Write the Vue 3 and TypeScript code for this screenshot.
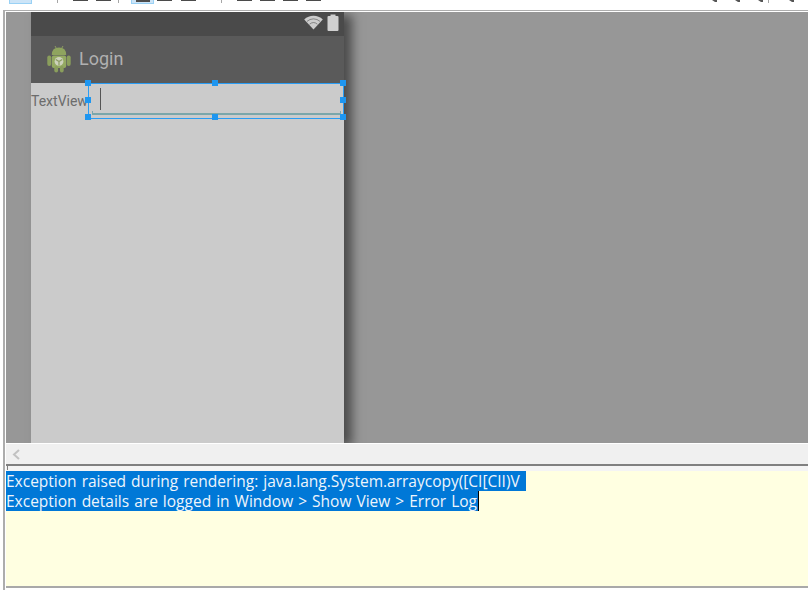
<script setup lang="ts">
const groups: { left: number; width: number; kind: string }[] = [
  { left: 9, width: 23, kind: 'on' },
  { left: 57, width: 1, kind: 'sep' },
  { left: 73, width: 15, kind: 'stub' },
  { left: 96, width: 15, kind: 'stub' },
  { left: 118, width: 1, kind: 'sep' },
  { left: 131, width: 23, kind: 'active' },
  { left: 157, width: 15, kind: 'stub' },
  { left: 181, width: 15, kind: 'stub' },
  { left: 221, width: 1, kind: 'sep' },
  { left: 237, width: 15, kind: 'stub' },
  { left: 260, width: 15, kind: 'stub' },
  { left: 283, width: 15, kind: 'stub' },
  { left: 306, width: 15, kind: 'stub' },
  { left: 712, width: 5, kind: 'tip' },
  { left: 735, width: 5, kind: 'tip' },
  { left: 758, width: 5, kind: 'tip' },
  { left: 768, width: 1, kind: 'sep' },
  { left: 789, width: 5, kind: 'tip' },
]
const handles = [
  { x: -1, y: -1 }, { x: 126, y: -1 }, { x: 254, y: -1 },
  { x: -1, y: 16 }, { x: 254, y: 16 },
  { x: -1, y: 33 }, { x: 126, y: 33 }, { x: 254, y: 33 },
]
</script>

<template>
  <div class="window">
    <div class="toolbar">
      <span
        v-for="g in groups"
        :key="g.left"
        class="tool"
        :class="g.kind"
        :style="{ left: g.left + 'px', width: g.width + 'px' }"
      >
        <i v-if="g.kind === 'active'" class="active-stub"></i>
      </span>
    </div>
    <div class="body">
      <div class="canvas">
        <div class="phone">
          <div class="status">
            <svg class="wifi" width="19" height="15" viewBox="0 0 19 15">
              <path d="M9.5 14.5 L0.2 4.4 A13.5 13.5 0 0 1 18.8 4.4 Z" fill="#cccccc" />
              <path d="M3 6.4 A9.6 9.6 0 0 1 16 6.4" fill="none" stroke="#55555599" stroke-width="1" />
              <path d="M5.6 9.2 A6 6 0 0 1 13.4 9.2" fill="none" stroke="#55555599" stroke-width="1" />
            </svg>
            <svg class="battery" width="12" height="17" viewBox="0 0 12 17">
              <path d="M3.5 0.5 H8.5 V2 H10.5 Q11.5 2 11.5 3 V16 Q11.5 17 10.5 17 H1.5 Q0.5 17 0.5 16 V3 Q0.5 2 1.5 2 H3.5 Z" fill="#d0d0d0" />
            </svg>
          </div>
          <div class="actionbar">
            <svg class="robot" width="24" height="28" viewBox="0 0 24 28">
              <path d="M8 1 L9.5 3.6 M16 1 L14.5 3.6" stroke="#8f9e62" stroke-width="1" />
              <path d="M4.8 10 Q4.8 2.6 12 2.6 Q19.2 2.6 19.2 10 Z" fill="#8fa45f" />
              <rect x="4.8" y="10.6" width="14.4" height="12.4" rx="2" fill="#94aa62" />
              <rect x="0.3" y="10.5" width="3.9" height="10.5" rx="1.9" fill="#8a9e5c" />
              <rect x="19.8" y="10.5" width="3.9" height="10.5" rx="1.9" fill="#8a9e5c" />
              <rect x="7.3" y="21" width="3.8" height="6.5" rx="1.9" fill="#8a9e5c" />
              <rect x="12.9" y="21" width="3.8" height="6.5" rx="1.9" fill="#8a9e5c" />
              <circle cx="12" cy="16.4" r="4.4" fill="#cdd2bb" />
              <path d="M12 16.6 L8.8 14.4 M12 16.6 L15.2 14.4 M12 16.6 V20.6" stroke="#8b9c63" stroke-width="1.2" />
            </svg>
            <span class="title">Login</span>
          </div>
          <div class="content">
            <div class="row">
              <span class="textview">TextView</span>
              <div class="edit">
                <span class="cursor"></span>
                <span class="underline"></span>
                <span
                  v-for="h in handles"
                  :key="`${h.x}-${h.y}`"
                  class="handle"
                  :style="{ left: h.x + 'px', top: h.y + 'px' }"
                ></span>
              </div>
            </div>
          </div>
        </div>
      </div>
      <div class="scrollbar">
        <svg width="9" height="11" viewBox="0 0 9 11">
          <path d="M7 1 L2 5.5 L7 10" fill="none" stroke="#c2c2c2" stroke-width="2" />
        </svg>
      </div>
      <div class="divider"></div>
      <div class="errors">
        <div class="line"><span class="sel first">Exception raised during rendering: java.lang.System.arraycopy([CI[CII)V</span></div>
        <div class="line"><span class="sel caret">Exception details are logged in Window &gt; Show View &gt; Error Log</span></div>
      </div>
    </div>
  </div>
</template>

<style scoped>
.window {
  position: relative;
  width: 808px;
  height: 590px;
  display: flex;
  flex-direction: column;
  background: #fff;
  overflow: hidden;
  font-family: "Open Sans", "Noto Sans", sans-serif;
}
.toolbar {
  position: relative;
  height: 10px;
  flex: none;
}
.tool {
  position: absolute;
  top: 0;
  box-sizing: border-box;
}
.tool.on,
.tool.active {
  height: 4px;
  background: #cce4f7;
  border: 1px solid #99d1f5;
  border-top: 0;
}
.active-stub {
  position: absolute;
  left: 4px;
  top: 0;
  width: 14px;
  height: 2px;
  background: #4d4d4d;
}
.tool.sep {
  height: 3px;
  background: #a6a6a6;
}
.tool.stub {
  height: 1px;
  background: #4b4b4b;
}
.tool.tip {
  height: 2px;
  background: #555;
  clip-path: polygon(0 0, 100% 0, 100% 100%, 60% 100%);
}
.body {
  flex: 1;
  min-height: 0;
  margin-left: 3px;
  border-top: 1px solid #adadad;
  border-left: 2px solid #adadad;
  padding: 1px 0 0 1px;
  display: flex;
  flex-direction: column;
}
.canvas {
  height: 431px;
  flex: none;
  background: #979797;
  padding-left: 25px;
  overflow: hidden;
}
.phone {
  width: 313px;
  height: 100%;
  display: flex;
  flex-direction: column;
  box-shadow: 8px 3px 10px rgba(0, 0, 0, 0.5);
}
.status {
  height: 24px;
  flex: none;
  background: #4a4a4a;
  display: flex;
  justify-content: flex-end;
  align-items: flex-start;
  padding: 2px 5px 0 0;
  box-sizing: border-box;
  gap: 4px;
}
.wifi {
  margin-top: 1px;
}
.actionbar {
  height: 47px;
  flex: none;
  background: #5a5a5a;
  display: flex;
  align-items: center;
  padding-left: 16px;
  box-sizing: border-box;
}
.robot {
  margin-top: -1px;
}
.title {
  margin-left: 8px;
  margin-top: -2px;
  font-family: Roboto, sans-serif;
  font-size: 18px;
  color: #b0b0b0;
}
.content {
  flex: 1;
  background: #cbcbcb;
}
.row {
  display: flex;
  align-items: flex-start;
}
.textview {
  width: 57px;
  flex: none;
  margin-top: 9px;
  font-family: Roboto, sans-serif;
  font-size: 14px;
  line-height: 18px;
  color: #6c6c6c;
  white-space: nowrap;
}
.edit {
  position: relative;
  width: 256px;
  height: 36px;
  box-sizing: border-box;
  border: 1px solid #2a9df4;
}
.cursor {
  position: absolute;
  left: 11px;
  top: 4px;
  width: 1px;
  height: 22px;
  background: #555;
}
.underline {
  position: absolute;
  left: 3px;
  right: 2px;
  bottom: 3px;
  height: 4px;
  box-sizing: border-box;
  border: 1px solid #7ba7ab;
  border-top: 0;
  border-bottom-width: 2px;
}
.handle {
  position: absolute;
  width: 6px;
  height: 6px;
  margin: -3px 0 0 -3px;
  background: #1e96f0;
}
.scrollbar {
  height: 21px;
  flex: none;
  box-sizing: border-box;
  background: #f0f0f0;
  border-top: 1px solid #fff;
  display: flex;
  align-items: center;
  padding-left: 6px;
}
.divider {
  position: relative;
  height: 7px;
  flex: none;
  box-sizing: border-box;
  border-top: 2px solid #808080;
  background: #f4f4f4;
}
.divider::before {
  content: "";
  position: absolute;
  left: 1px;
  top: 0;
  width: 1px;
  height: 4px;
  background: #808080;
}
.errors {
  height: 115px;
  flex: none;
  background: #ffffe1;
  border-bottom: 2px solid #a9a9a9;
  font-size: 15.5px;
  word-spacing: 1px;
  line-height: 20px;
  color: #eef5fc;
}
.line {
  height: 20px;
  white-space: nowrap;
}
.sel {
  display: inline-block;
  background: #0078d7;
  height: 20px;
  padding-right: 1px;
}
.first {
  padding-right: 6px;
}
.caret {
  border-right: 1px solid #000;
}
</style>
